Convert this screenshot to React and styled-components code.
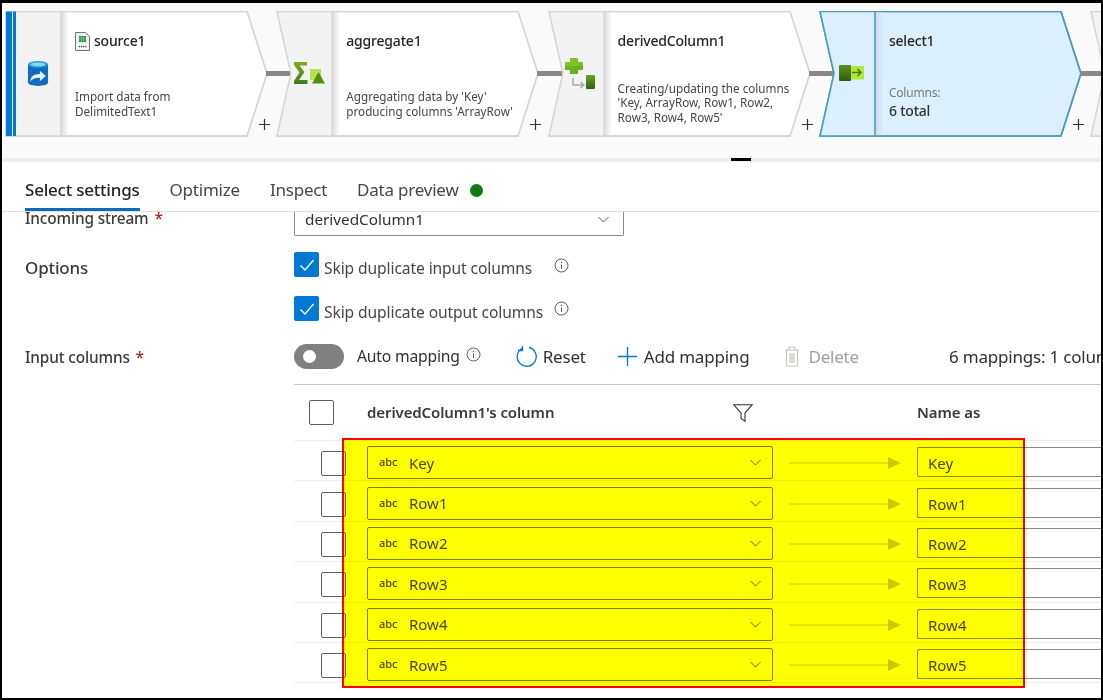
import React from "react";
import styled, { createGlobalStyle } from "styled-components";

const Global = createGlobalStyle`
  html, body { margin: 0; padding: 0; background: #000; }
  body { font-family: "Noto Sans", "Open Sans", sans-serif; color: #323130; }
`;

const Frame = styled.div`
  width: 1099px;
  height: 695px;
  margin: 3px 2px 2px;
  background: #fff;
  overflow: hidden;
  display: flex;
  flex-direction: column;
`;

const Pipeline = styled.div`
  height: 155px;
  flex: none;
  box-sizing: border-box;
  padding: 8px 0 0 3px;
  background: #fafafa;
  display: flex;
  gap: 9.3px;
  overflow: hidden;
`;

const Node = styled.div`
  position: relative;
  flex: none;
  width: 262px;
  height: 126px;
  display: flex;
`;

const Shape = styled.svg`
  position: absolute;
  inset: 0;
  width: 262px;
  height: 126px;
`;

const IconSlot = styled.div`
  position: relative;
  width: 66px;
  flex: none;
  padding-bottom: 2px;
  box-sizing: border-box;
  display: flex;
  align-items: center;
  justify-content: center;
`;

const NodeBody = styled.div`
  position: relative;
  flex: 1;
  box-sizing: border-box;
  padding: 20px 0 ${p => p.$pad}px 4px;
  display: flex;
  flex-direction: column;
  justify-content: space-between;
`;

const NodeTitle = styled.div`
  display: flex;
  align-items: center;
  gap: 4px;
  font-size: 14px;
  line-height: 20px;
  letter-spacing: -0.2px;
  font-weight: 500;
  color: #252423;
`;

const NodeDesc = styled.div`
  font-size: 11.7px;
  line-height: 14.3px;
  letter-spacing: 0;
  color: #484644;
  white-space: nowrap;
`;

const DescLabel = styled.div`
  font-size: 12px;
  line-height: 16px;
  letter-spacing: -0.2px;
  color: #7a7a7a;
`;

const DescValue = styled.div`
  font-size: 14px;
  line-height: 20px;
  letter-spacing: -0.2px;
  font-weight: 500;
  color: #323130;
`;

const Connector = styled.div`
  position: absolute;
  left: 100%;
  margin-left: -1px;
  top: 60px;
  width: 25px;
  height: 5px;
  background: #8a8886;
`;

const Plus = styled.svg`
  position: absolute;
  right: -4px;
  top: 107px;
  width: 13px;
  height: 13px;
`;

const SplitBar = styled.div`
  position: relative;
  height: 4px;
  flex: none;
  background: #eeeeee;
`;

const SplitHandle = styled.div`
  position: absolute;
  left: 729px;
  top: 0;
  width: 20px;
  height: 3px;
  background: #000;
`;

const Tabs = styled.div`
  height: 50px;
  flex: none;
  box-sizing: border-box;
  padding-left: 23px;
  display: flex;
  align-items: flex-start;
  gap: 30px;
  border-bottom: 1px solid #e1e1e1;
`;

const Tab = styled.div`
  height: 49px;
  box-sizing: border-box;
  padding-top: 17px;
  font-size: 17px;
  line-height: 22px;
  letter-spacing: -0.22px;
  font-weight: ${p => (p.$active ? 500 : 400)};
  color: ${p => (p.$active ? "#252423" : "#484644")};
  border-bottom: 3px solid ${p => (p.$active ? "#0f6cbd" : "transparent")};
  display: flex;
  gap: 11px;
  white-space: nowrap;
`;

const Dot = styled.span`
  width: 13px;
  height: 13px;
  margin-top: 5px;
  border-radius: 50%;
  background: #107c10;
`;

const Form = styled.div`
  flex: 1;
  min-height: 0;
  padding-left: 23px;
  display: grid;
  grid-template-columns: 269px 1fr;
  grid-template-rows: 24px 108px 1fr;
`;

const Label = styled.div`
  font-size: ${p => p.$fs ?? 15.4}px;
  line-height: ${p => p.$lh ?? 20}px;
  font-weight: 500;
  letter-spacing: -0.15px;
  color: #3b3a39;
  margin-top: ${p => p.$top}px;
`;

const Required = styled.span`
  color: #a4262c;
  margin-left: 2px;
`;

const Dropdown = styled.div`
  width: 330px;
  height: 24px;
  box-sizing: border-box;
  border: 1px solid #8a8886;
  border-top: none;
  border-radius: 0 0 2px 2px;
  padding: 0 14px 9px 10px;
  display: flex;
  align-items: center;
  justify-content: space-between;
  font-size: 15.3px;
  line-height: 14px;
  color: #323130;
`;

const OptionList = styled.div`
  padding-top: 16px;
  display: flex;
  flex-direction: column;
  gap: 19px;
`;

const OptionRow = styled.div`
  display: flex;
  align-items: flex-start;
  height: 25px;
`;

const Box = styled.div`
  width: 25px;
  height: 25px;
  flex: none;
  box-sizing: border-box;
  border-radius: 2px;
  background: ${p => (p.$on ? "#0078d4" : "#fff")};
  border: 1px solid ${p => (p.$on ? "#0078d4" : "#605e5c")};
  display: flex;
  align-items: center;
  justify-content: center;
`;

const OptionText = styled.span`
  margin: 6px 0 0 5px;
  font-size: 15.6px;
  line-height: 20px;
  letter-spacing: -0.1px;
  color: #484644;
  width: ${p => p.$w}px;
  white-space: nowrap;
`;

const Info = styled.svg`
  width: 15px;
  height: 15px;
  flex: none;
  margin-top: ${p => p.$top ?? 0}px;
`;

const Right = styled.div`
  min-width: 0;
`;

const Toolbar = styled.div`
  height: 41px;
  box-sizing: border-box;
  padding-bottom: 16px;
  border-bottom: 1px solid #c8c8c8;
  display: flex;
  align-items: center;
  white-space: nowrap;
  letter-spacing: -0.2px;
`;

const Toggle = styled.div`
  width: 50px;
  height: 25px;
  flex: none;
  border-radius: 13px;
  background: #808080;
  position: relative;
`;

const Knob = styled.div`
  position: absolute;
  left: 9px;
  top: 6px;
  width: 13px;
  height: 13px;
  border-radius: 50%;
  background: #fff;
`;

const Tool = styled.div`
  display: flex;
  align-items: center;
  flex: none;
  margin-left: ${p => p.$ml}px;
  gap: ${p => p.$gap ?? 6}px;
  color: ${p => (p.$off ? "#a19f9d" : "#323130")};
  font-size: ${p => p.$fs ?? 17}px;
`;

const RowGrid = styled.div`
  display: grid;
  grid-template-columns: 73px 406px 144px 1fr;
  align-items: center;
  box-sizing: border-box;
  border-bottom: 1px solid #eeeeee;
  height: ${p => p.$h}px;
`;

const BoxCell = styled.div`
  padding-left: ${p => p.$pl}px;
  margin-top: ${p => p.$top ?? 0}px;
`;

const HeadCell = styled.div`
  font-size: 15px;
  font-weight: 600;
  letter-spacing: -0.1px;
  color: #3b3a39;
  display: flex;
  justify-content: space-between;
  align-items: center;
  padding-right: ${p => p.$pr ?? 0}px;
  margin-top: -1px;
`;

const FilterIcon = styled.svg`
  width: 20px;
  height: 18px;
  margin-top: 2px;
`;

const Table = styled.div`
  position: relative;
`;

const ColSelect = styled.div`
  height: 33px;
  margin-top: 4px;
  box-sizing: border-box;
  border: 1px solid #7d7b79;
  border-radius: 2px;
  display: flex;
  align-items: center;
  padding: 0 11px;
  font-size: 15px;
  color: #484644;
`;

const TypeTag = styled.span`
  width: 30px;
  margin-top: -2px;
  font-size: 11px;
  font-weight: 500;
  color: #484644;
`;

const ColName = styled.span`
  flex: 1;
`;

const Arrow = styled.svg`
  width: 112px;
  height: 14px;
  margin-left: 16px;
  margin-top: 5px;
`;

const NameInput = styled.div`
  height: 30px;
  margin-top: 3px;
  box-sizing: border-box;
  border: 1px solid #8a8886;
  border-right: none;
  border-radius: 2px 0 0 2px;
  padding-left: 10px;
  font-size: 15px;
  line-height: 30px;
  color: #484644;
`;

const Highlight = styled.div`
  position: absolute;
  left: 48px;
  top: 53px;
  width: 683px;
  height: 250px;
  box-sizing: border-box;
  border: 2px solid #ff0000;
  background: #ffff00;
  mix-blend-mode: multiply;
  pointer-events: none;
`;

const PlusGlyph = () => (
  <Plus viewBox="0 0 13 13"><path d="M6.5 1v11M1 6.5h11" stroke="#323130" strokeWidth="1.2" /></Plus>
);

const NodeShape = ({ first, selected }) => {
  const fill = selected ? "#dcefff" : "#fff";
  const col = selected ? "#dcefff" : "#f3f3f3";
  const stroke = selected ? "#4b9dbb" : "#d6d6d6";
  const sw = selected ? 1.6 : 1.4;
  const notch = first ? "" : "L15 62.5 ";
  const body = `M1 .5 H242 L262 62.5 L242 125 H1 ${notch}Z`;
  const left = `M1 .5 H56 V125 H1 ${notch}Z`;
  return (
    <Shape viewBox="0 0 262 126">
      <defs>
        <linearGradient id={selected ? "gs" : "gn"} x1="0" x2="1" y1="0" y2="0">
          <stop offset="0" stopColor={selected ? "#c9d9e6" : "#dcdcdc"} />
          <stop offset="1" stopColor={fill} />
        </linearGradient>
      </defs>
      <path d={body} fill={fill} stroke={stroke} strokeWidth={sw} />
      <path d={left} fill={col} />
      <rect x="56" y="1" width="8" height="123.500" fill={`url(#${selected ? "gs" : "gn"})`} />
      <path d={body} fill="none" stroke={stroke} strokeWidth={sw} />
      <path d="M56 .5V125" stroke={stroke} strokeWidth={sw} />
      {first && (
        <>
          <rect x="1" y=".5" width="6" height="124.500" fill="#0078d4" />
          <rect x="8" y=".5" width="3" height="124.500" fill="#0078d4" />
        </>
      )}
    </Shape>
  );
};

const DbIcon = () => (
  <svg width="22" height="27" viewBox="0 0 23 27">
    <path d="M1 4v19c0 2 4.500 3.500 10.500 3.500S22 25 22 23V4z" fill="#0f6cc0" />
    <ellipse cx="11.500" cy="4" rx="10.500" ry="3.500" fill="#2a9fd8" />
    <ellipse cx="11.500" cy="4" rx="7.500" ry="2" fill="#7fdcf0" />
    <path d="M3.500 22c0-5 3-8 10-8V10.500l6 5.500-6 5.500V18c-5 0-7.500 1-10 4z" fill="#fff" opacity=".92" />
  </svg>
);

const CsvIcon = () => (
  <svg width="15" height="19" viewBox="0 0 15 19">
    <path d="M.5.500h10l4 4v14H.5z" fill="#eef0ef" stroke="#6b7775" />
    <rect x="4" y="4" width="7" height="6" fill="#1d8a3c" />
    <path d="M4 6h7M4 8h7M6.300 4v6M8.600 4v6" stroke="#b8e0c0" strokeWidth=".5" />
    <rect x="2" y="12" width="11" height="4.500" fill="#fff" />
    <path d="M3.500 14.500h8" stroke="#555" strokeWidth="1.400" strokeDasharray="1.500 .7" />
  </svg>
);

const SigmaIcon = () => (
  <svg width="32" height="22" viewBox="0 0 32 22">
    <defs>
      <linearGradient id="sg" x1="0" x2="0" y1="0" y2="1">
        <stop offset="0" stopColor="#7aae1c" />
        <stop offset="1" stopColor="#3f7d14" />
      </linearGradient>
    </defs>
    <path d="M1 0h13v3.500H6.500l5 6.500-5.500 8h8.500V22H1v-3l5.500-8.500L1 3z" fill="url(#sg)" />
    <rect x="17" y="7" width="11" height="11" fill="#b4e051" />
    <path d="M25.500 10L32 21.500H19z" fill="#4f8f12" />
  </svg>
);

const DerivedIcon = () => (
  <svg width="31" height="31" viewBox="0 0 31 31">
    <defs>
      <linearGradient id="dg" x1="0" x2="0" y1="0" y2="1">
        <stop offset="0" stopColor="#6aa41f" />
        <stop offset="1" stopColor="#335f10" />
      </linearGradient>
    </defs>
    <path d="M6 0h6a1 1 0 011 1v3h4a1 1 0 011 1v6a1 1 0 01-1 1h-4v3a1 1 0 01-1 1H6a1 1 0 01-1-1v-3H1a1 1 0 01-1-1V5a1 1 0 011-1h4V1a1 1 0 011-1z" fill="#7ec225" />
    <path d="M0 8h18v3a1 1 0 01-1 1h-4v3a1 1 0 01-1 1H6a1 1 0 01-1-1v-3H1a1 1 0 01-1-1z" fill="#6db01f" />
    <path d="M8 20v7h10" fill="none" stroke="#a8a8a8" strokeWidth="1.500" />
    <path d="M15.500 24l3.500 3-3.500 3" fill="none" stroke="#a8a8a8" strokeWidth="1.500" />
    <rect x="21" y="17" width="9" height="14" rx="1" fill="url(#dg)" />
  </svg>
);

const SelectIcon = () => (
  <svg width="25" height="16" viewBox="0 0 25 16">
    <defs>
      <linearGradient id="sl" x1="0" x2="0" y1="0" y2="1">
        <stop offset="0" stopColor="#5d8f25" />
        <stop offset="1" stopColor="#2f5c10" />
      </linearGradient>
    </defs>
    <rect x="12" y="1" width="13" height="13.500" fill="#b4e634" />
    <rect x="0" y="0" width="12" height="16" rx="1" fill="url(#sl)" />
    <path d="M13 7.500h9M18.500 4l3.500 3.500-3.500 3.500" fill="none" stroke="#3f7d14" strokeWidth="1.500" />
  </svg>
);

const InfoIcon = ({ top }) => (
  <Info viewBox="0 0 15 15" $top={top}>
    <circle cx="7.500" cy="7.500" r="6.500" fill="none" stroke="#605e5c" />
    <path d="M7.500 6.500v4.500" stroke="#605e5c" />
    <circle cx="7.500" cy="4.500" r=".7" fill="#605e5c" />
  </Info>
);

const Check = () => (
  <svg width="16" height="14" viewBox="0 0 16 14"><path d="M1.500 7.500l4.500 4.500L14.500 2" fill="none" stroke="#fff" strokeWidth="1.300" /></svg>
);

const Chevron = ({ color = "#605e5c" }) => (
  <svg width="11" height="7" viewBox="0 0 11 7"><path d="M.5 1l5 5 5-5" fill="none" stroke={color} /></svg>
);

const names = ["Key", "Row1", "Row2", "Row3", "Row4", "Row5"];

export default function App() {
  return (
    <>
      <Global />
      <Frame>
        <Pipeline>
          <Node>
            <NodeShape first />
            <IconSlot><DbIcon /></IconSlot>
            <NodeBody $pad={19}>
              <NodeTitle><CsvIcon />source1</NodeTitle>
              <NodeDesc>Import data from<br />DelimitedText1</NodeDesc>
            </NodeBody>
            <Connector />
            <PlusGlyph />
          </Node>
          <Node>
            <NodeShape />
            <IconSlot><SigmaIcon /></IconSlot>
            <NodeBody $pad={19}>
              <NodeTitle>aggregate1</NodeTitle>
              <NodeDesc>Aggregating data by 'Key'<br />producing columns 'ArrayRow'</NodeDesc>
            </NodeBody>
            <Connector />
            <PlusGlyph />
          </Node>
          <Node>
            <NodeShape />
            <IconSlot><DerivedIcon /></IconSlot>
            <NodeBody $pad={13}>
              <NodeTitle>derivedColumn1</NodeTitle>
              <NodeDesc>Creating/updating the columns<br />'Key, ArrayRow, Row1, Row2,<br />Row3, Row4, Row5'</NodeDesc>
            </NodeBody>
            <Connector />
            <PlusGlyph />
          </Node>
          <Node>
            <NodeShape selected />
            <IconSlot><SelectIcon /></IconSlot>
            <NodeBody $pad={16}>
              <NodeTitle>select1</NodeTitle>
              <div>
                <DescLabel>Columns:</DescLabel>
                <DescValue>6 total</DescValue>
              </div>
            </NodeBody>
            <Connector />
            <PlusGlyph />
          </Node>
          <Node>
            <NodeShape />
          </Node>
        </Pipeline>
        <SplitBar><SplitHandle /></SplitBar>
        <Tabs>
          <Tab $active>Select settings</Tab>
          <Tab>Optimize</Tab>
          <Tab>Inspect</Tab>
          <Tab>Data preview<Dot /></Tab>
        </Tabs>
        <Form>
          <Label $top={0} $lh={14}>Incoming stream <Required>*</Required></Label>
          <Dropdown>derivedColumn1<Chevron /></Dropdown>
          <Label $top={22} $fs={17}>Options</Label>
          <OptionList>
            <OptionRow>
              <Box $on><Check /></Box>
              <OptionText $w={230}>Skip duplicate input columns</OptionText>
              <InfoIcon top={6} />
            </OptionRow>
            <OptionRow>
              <Box $on><Check /></Box>
              <OptionText $w={230}>Skip duplicate output columns</OptionText>
              <InfoIcon top={5} />
            </OptionRow>
          </OptionList>
          <Label $top={4}>Input columns <Required>*</Required></Label>
          <Right>
            <Toolbar>
              <Toggle><Knob /></Toggle>
              <Tool $ml={13} $gap={6} $fs={15.7}>Auto mapping<InfoIcon top={-4} /></Tool>
              <Tool $ml={34}>
                <svg width="22" height="22" viewBox="0 0 22 22"><path d="M7.500 3.200A9.500 9.500 0 1 0 14 2.500M7.500 1v4.500H3" fill="none" stroke="#0078d4" strokeWidth="1.300" /></svg>
                Reset
              </Tool>
              <Tool $ml={32} $gap={7}>
                <svg width="19" height="19" viewBox="0 0 19 19"><path d="M9.500 0v19M0 9.500h19" stroke="#0078d4" strokeWidth="1.300" /></svg>
                Add mapping
              </Tool>
              <Tool $ml={35} $off $gap={8}>
                <svg width="16" height="21" viewBox="0 0 16 21"><path d="M1 4h14M5 4V1h6v3M2.500 4v16h11V4M6 7v10M8 7v10M10 7v10" fill="none" stroke="#c8c6c4" strokeWidth="1.200" /></svg>
                Delete
              </Tool>
              <Tool $ml={90}>6 mappings: 1 column mapped</Tool>
            </Toolbar>
            <Table>
              <RowGrid $h={56}>
                <BoxCell $pl={15}><Box /></BoxCell>
                <HeadCell $pr={20}>
                  derivedColumn1's column
                  <FilterIcon viewBox="0 0 20 18"><path d="M.8.800h18.400L12 9v8.200L8 14.500V9z" fill="none" stroke="#323130" strokeWidth="1.100" /></FilterIcon>
                </HeadCell>
                <span />
                <HeadCell>Name as</HeadCell>
              </RowGrid>
              {names.map(n => (
                <RowGrid $h={40.4} key={n}>
                  <BoxCell $pl={27} $top={6}><Box /></BoxCell>
                  <ColSelect>
                    <TypeTag>abc</TypeTag>
                    <ColName>{n}</ColName>
                    <Chevron />
                  </ColSelect>
                  <Arrow viewBox="0 0 112 14">
                    <path d="M0 7h100" stroke="#c8c8c8" />
                    <path d="M99 1l13 6-13 6z" fill="#c8c8c8" />
                  </Arrow>
                  <NameInput>{n}</NameInput>
                </RowGrid>
              ))}
              <Highlight />
            </Table>
          </Right>
        </Form>
      </Frame>
    </>
  );
}
